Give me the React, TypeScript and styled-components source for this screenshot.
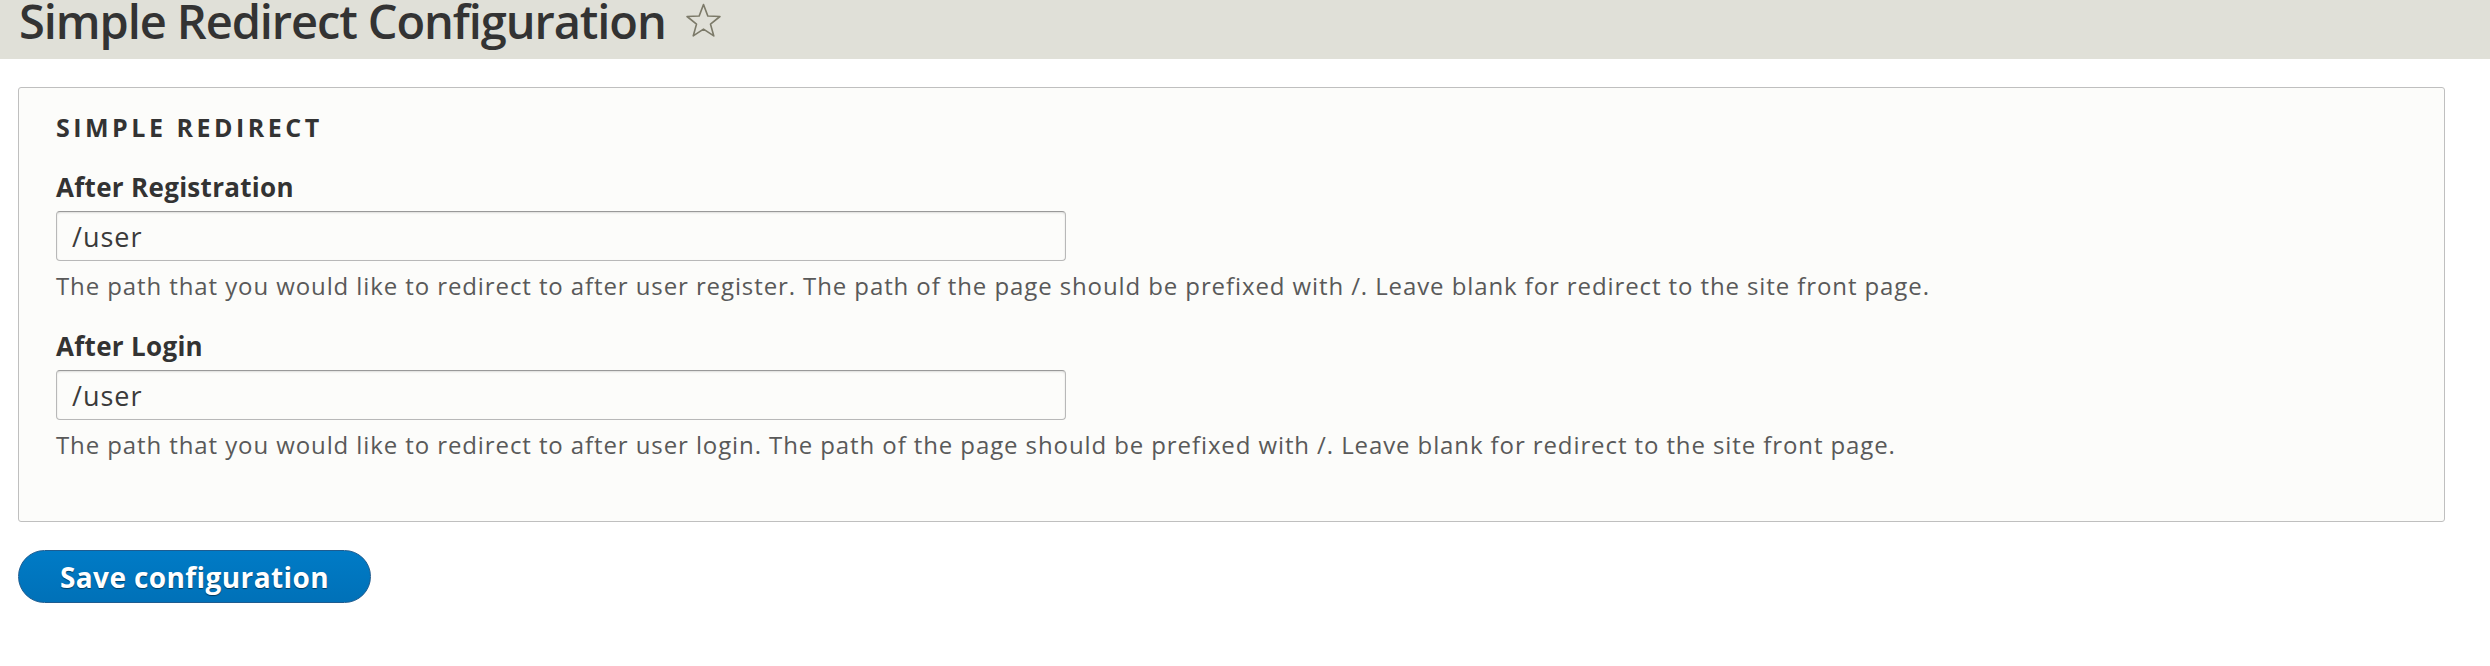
import React from 'react';
import styled, {createGlobalStyle} from 'styled-components';

const GlobalStyle = createGlobalStyle`
  body {
    margin: 0;
    background: #fff;
    font-family: "Open Sans", "Noto Sans", sans-serif;
    color: #333;
  }
`

const Header = styled.header`
  height: 59px;
  background: #e0e0d8;
  display: flex;
  align-items: flex-start;
  padding-left: 19px;
  overflow: hidden;
`

const Title = styled.h1`
  margin: 0;
  font-size: 47px;
  line-height: 42px;
  font-weight: 600;
  letter-spacing: -1.1px;
  color: #333;
  display: flex;
  align-items: flex-start;
  gap: 19px;
`

const Star = styled.svg`
  width: 37px;
  height: 35px;
  margin-top: 3px;
  flex: none;
`

const Main = styled.main`
  padding: 28px 45px 0 18px;
`

const Panel = styled.section`
  border: 1px solid #bfbfbf;
  border-radius: 3px;
  background: #fcfcfa;
  padding: 24px 37px 61px 37px;
`

const Legend = styled.h2`
  margin: 0 0 30px;
  font-size: 25px;
  line-height: 30px;
  font-weight: 700;
  letter-spacing: 3.5px;
  text-transform: uppercase;
  color: #333;
`

const Field = styled.div`
  & + & {
    margin-top: 30px;
  }
`

const Label = styled.label`
  display: block;
  margin-bottom: 9px;
  font-size: 26px;
  line-height: 30px;
  font-weight: 700;
  letter-spacing: 0.3px;
  color: #333;
`

const TextInput = styled.input`
  display: block;
  box-sizing: border-box;
  width: 1010px;
  height: 50px;
  padding: 0 15px;
  border: 1px solid #b8b8b8;
  border-top-color: #999;
  border-radius: 4px;
  background: #fcfcfa;
  box-shadow: inset 0 1px 2px rgba(0, 0, 0, 0.125);
  font-family: "Open Sans", "Noto Sans", sans-serif;
  font-size: 27px;
  letter-spacing: 1px;
  color: #3a3a3a;
  outline: none;
`

const Description = styled.div`
  margin-top: 10px;
  font-size: 24px;
  line-height: 30px;
  letter-spacing: 0.9px;
  color: #595959;
`

const Actions = styled.div`
  margin-top: 28px;
`

const PrimaryButton = styled.button`
  width: 353px;
  height: 53px;
  padding: 0;
  border: 1px solid #1e5c90;
  border-radius: 30px;
  background: linear-gradient(to bottom, #007bc6, #0071b8);
  color: #fff;
  font-family: "Open Sans", "Noto Sans", sans-serif;
  font-size: 28px;
  font-weight: 700;
  letter-spacing: 0.4px;
  text-shadow: 0 1px 1px rgba(0, 0, 0, 0.5);
  cursor: pointer;
`

const fields = [
  {id: 'register', label: 'After Registration', value: '/user', action: 'user register'},
  {id: 'login', label: 'After Login', value: '/user', action: 'user login'},
]

function App() {
  return (
    <>
      <GlobalStyle/>
      <Header>
        <Title>
          Simple Redirect Configuration
          <Star viewBox="0 0 36 34">
            <path
              d="M18 1.5 L22.2 12.6 L34 13.1 L24.8 20.5 L28 32 L18 25.4 L8 32 L11.2 20.5 L2 13.1 L13.8 12.6 Z"
              fill="none"
              stroke="#7c7a69"
              strokeWidth="1.6"
              strokeLinejoin="round"
            />
          </Star>
        </Title>
      </Header>
      <Main>
        <Panel>
          <Legend>Simple Redirect</Legend>
          {fields.map(f => (
            <Field key={f.id}>
              <Label htmlFor={f.id}>{f.label}</Label>
              <TextInput id={f.id} defaultValue={f.value}/>
              <Description>
                The path that you would like to redirect to after {f.action}. The path of the page should be prefixed with /. Leave blank for redirect to the site front page.
              </Description>
            </Field>
          ))}
        </Panel>
        <Actions>
          <PrimaryButton>Save configuration</PrimaryButton>
        </Actions>
      </Main>
    </>
  )
}

export default App
